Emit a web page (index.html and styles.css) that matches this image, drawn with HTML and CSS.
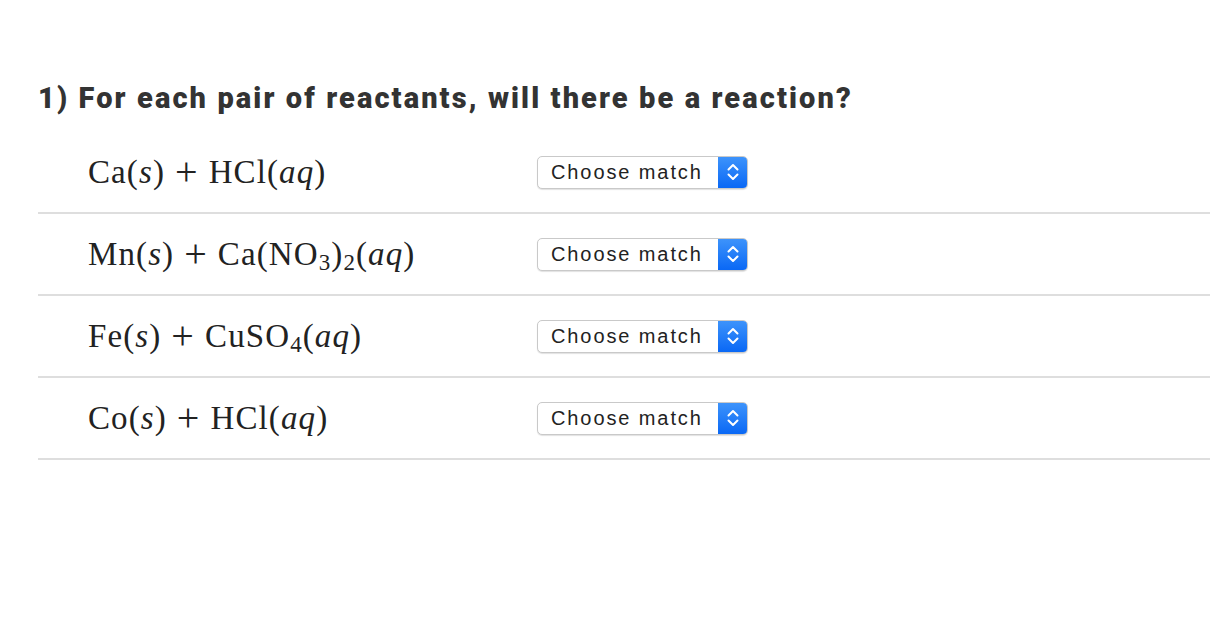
FILE: index.html
```html
<!DOCTYPE html>
<html>
<head>
<meta charset="utf-8">
<link rel="stylesheet" href="styles.css">
</head>
<body>
<div class="page">
  <h1 class="title">1) For each pair of reactants, will there be a reaction?</h1>
  <div class="rows">
    <div class="row">
      <div class="eq">Ca<span class="p">(</span><i>s</i><span class="p">)</span><span class="op">+</span>HCl<span class="p">(</span><i>aq</i><span class="p">)</span></div>
      <div class="select"><span class="label">Choose match</span><span class="btn"><svg width="14" height="20" viewBox="0 0 14 20"><path d="M2.5 7.5 L7 3 L11.5 7.5 M2.5 12.5 L7 17 L11.5 12.5" fill="none" stroke="#fff" stroke-width="2" stroke-linecap="round" stroke-linejoin="round"/></svg></span></div>
    </div>
    <div class="row">
      <div class="eq">Mn<span class="p">(</span><i>s</i><span class="p">)</span><span class="op">+</span>Ca<span class="p">(</span>NO<sub>3</sub><span class="p">)</span><sub>2</sub><span class="p">(</span><i>aq</i><span class="p">)</span></div>
      <div class="select"><span class="label">Choose match</span><span class="btn"><svg width="14" height="20" viewBox="0 0 14 20"><path d="M2.5 7.5 L7 3 L11.5 7.5 M2.5 12.5 L7 17 L11.5 12.5" fill="none" stroke="#fff" stroke-width="2" stroke-linecap="round" stroke-linejoin="round"/></svg></span></div>
    </div>
    <div class="row">
      <div class="eq">Fe<span class="p">(</span><i>s</i><span class="p">)</span><span class="op">+</span>CuSO<sub>4</sub><span class="p">(</span><i>aq</i><span class="p">)</span></div>
      <div class="select"><span class="label">Choose match</span><span class="btn"><svg width="14" height="20" viewBox="0 0 14 20"><path d="M2.5 7.5 L7 3 L11.5 7.5 M2.5 12.5 L7 17 L11.5 12.5" fill="none" stroke="#fff" stroke-width="2" stroke-linecap="round" stroke-linejoin="round"/></svg></span></div>
    </div>
    <div class="row">
      <div class="eq">Co<span class="p">(</span><i>s</i><span class="p">)</span><span class="op">+</span>HCl<span class="p">(</span><i>aq</i><span class="p">)</span></div>
      <div class="select"><span class="label">Choose match</span><span class="btn"><svg width="14" height="20" viewBox="0 0 14 20"><path d="M2.5 7.5 L7 3 L11.5 7.5 M2.5 12.5 L7 17 L11.5 12.5" fill="none" stroke="#fff" stroke-width="2" stroke-linecap="round" stroke-linejoin="round"/></svg></span></div>
    </div>
  </div>
</div>
</body>
</html>
```

FILE: styles.css
```css
html, body {
  margin: 0;
  padding: 0;
  background: #fff;
}
.page {
  padding: 78px 0 0 38px;
}
.title {
  margin: 0;
  font-family: Roboto, "Liberation Sans", sans-serif;
  font-weight: 900;
  font-size: 29px;
  line-height: 40px;
  color: #333;
  letter-spacing: 2.1px;
}
.rows {
  margin-top: 14px;
}
.row {
  display: flex;
  align-items: center;
  height: 80px;
  border-bottom: 2px solid #dedede;
  padding-left: 50px;
}
.eq {
  width: 449px;
  font-family: "Liberation Serif", "DejaVu Serif", serif;
  font-size: 33px;
  letter-spacing: 1.1px;
  color: #222;
  white-space: nowrap;
}
.eq i {
  font-style: italic;
}
.eq .op {
  margin: 0 10px;
  font-size: 40px;
  line-height: 0;
  vertical-align: -2px;
}
.eq sub {
  font-size: 23px;
  vertical-align: -5px;
  line-height: 0;
}
.select {
  display: flex;
  align-items: stretch;
  width: 211px;
  height: 33px;
  box-sizing: border-box;
  border: 1px solid #c9c9c9;
  border-radius: 5px;
  box-shadow: 0 1px 1px rgba(0,0,0,0.12);
  overflow: hidden;
  background: #fff;
}
.label {
  flex: 1;
  padding-left: 13px;
  font-family: "Liberation Sans", Arial, sans-serif;
  font-size: 20px;
  letter-spacing: 1.9px;
  line-height: 31px;
  color: #222;
}
.btn {
  width: 29px;
  display: flex;
  align-items: center;
  justify-content: center;
  background: linear-gradient(#3d93fb, #0a68f5);
}
```
